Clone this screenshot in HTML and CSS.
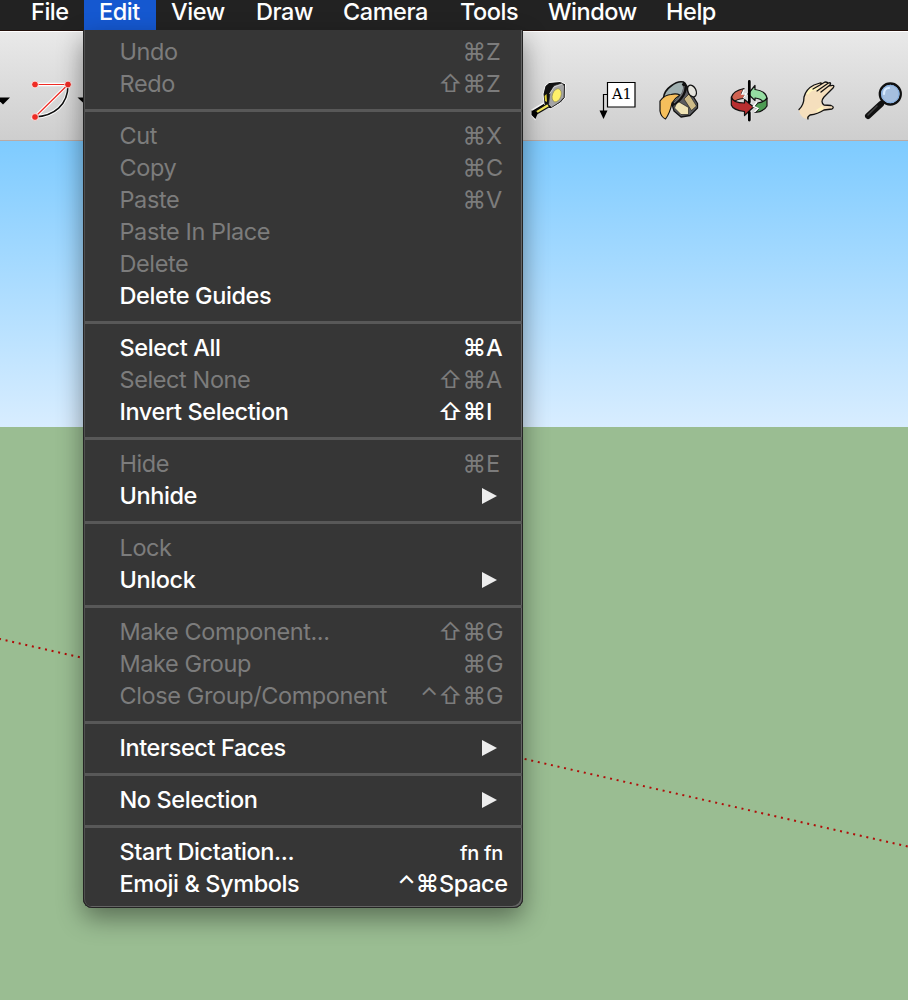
FILE: index.html
```html
<!DOCTYPE html>
<html lang="en">
<head>
    <meta charset="UTF-8">
    <meta name="viewport" content="width=device-width, initial-scale=1.0">
    <title>Edit menu</title>
    <link rel="stylesheet" href="styles.css">
</head>
<body>
    <nav class="menubar">
        <span class="menubar-item">File</span>
        <span class="menubar-item active">Edit</span>
        <span class="menubar-item">View</span>
        <span class="menubar-item">Draw</span>
        <span class="menubar-item">Camera</span>
        <span class="menubar-item">Tools</span>
        <span class="menubar-item">Window</span>
        <span class="menubar-item">Help</span>
    </nav>

    <div class="toolbar">
        <!-- arc tool with its dropdown arrows -->
        <svg class="tool tool-arc" viewBox="0 76 84 50">
            <path d="M-4 97.500H10L3 104.500Z" fill="#000"/>
            <path d="M77.500 97.500H92L85 104.500Z" fill="#000"/>
            <path d="M35 84.500H68L35 117C54 116 68 105 68 85" fill="none" stroke="#fff" stroke-width="3.500"/>
            <path d="M35 117C54 116 68 105 68 85" fill="none" stroke="#111" stroke-width="1.600"/>
            <path d="M35 84.500H68L35 117" fill="none" stroke="#ee2b24" stroke-width="1.200"/>
            <g fill="#ee2b24" stroke="#fff" stroke-width=".8">
                <circle cx="35" cy="84.500" r="3.400"/>
                <circle cx="68" cy="84.500" r="3.400"/>
                <circle cx="35" cy="117" r="3.400"/>
            </g>
        </svg>

        <div class="tool-group">
            <!-- tape measure -->
            <svg class="tool" viewBox="526 76 46 50">
                <path d="M532 110L547 101L550 106L537 113L535 119L531.500 115Z" fill="#000" stroke="#fff" stroke-width="1.600"/>
                <path d="M545 86L549 82.500L560 81.500L565.500 84L565 98L561 102.500L550 109L544 104L543 94Z" fill="#111" stroke="#fff" stroke-width="1"/>
                <path d="M534.500 111.500L547.500 103.500L549.500 106.500L537.500 113.500Z" fill="#f5e85c" stroke="#111" stroke-width="1.200"/>
                <path d="M531.500 110.500L537 111.500L537.500 114L535.500 119L531.500 115Z" fill="#000"/>
                <path d="M544.500 96L546.500 94L547 102L545 101Z" fill="#e7d738"/>
                <path d="M550 92L554 85.500L562 83L564.500 86L564 97.500L560 102L551.500 107.500L548.500 104.500Z" fill="#a5a5a5" stroke="#222" stroke-width=".8"/>
                <path d="M549.500 94L554 87L562.500 84" fill="none" stroke="#ddd" stroke-width=".8"/>
                <ellipse cx="556.700" cy="95.300" rx="4.300" ry="6.800" transform="rotate(19 556.700 95.300)" fill="#fff06a" stroke="#8a8550" stroke-width=".6"/>
            </svg>
            <!-- text label -->
            <svg class="tool" viewBox="596 76 46 50">
                <path d="M607.500 82.500H635V107H607.500Z" fill="#fff" stroke="#000" stroke-width="1.200"/>
                <path d="M607 94.500H603.500V112" fill="none" stroke="#000" stroke-width="1.200"/>
                <path d="M599.500 110.500H607.500L603.500 119Z" fill="#000"/>
                <text x="612" y="99" class="label-text">A1</text>
            </svg>
            <!-- paint bucket -->
            <svg class="tool" viewBox="656 76 46 50">
                <g stroke="#111" stroke-width="1.300" stroke-linejoin="round">
                    <path d="M685 83L697.500 103.500V108L690 115.500L681 117L674 111L672 104Z" fill="#5b5c60"/>
                    <path d="M677.500 101L688.500 107.500L688.500 114.500L681 114.500L674.500 108Z" fill="#efe3b4" stroke-width=".6"/>
                    <path d="M684 99L689 94L696.500 106L691.500 110.500Z" fill="#cdbb87" stroke-width=".6"/>
                    <ellipse cx="692" cy="91" rx="4" ry="6.200" transform="rotate(-25 692 91)" fill="#e4e3dc" stroke-width="1.300"/>
                    <path d="M663.500 98Q664 91 671 86Q678 80.500 683.500 82Q687.500 86 684.500 93Q680 102 672 105Z" fill="#a0b0b0" stroke-width="1.600"/>
                    <path d="M660 101Q665 94.500 671 94.500Q676 93 680 95Q675 98 672 103Q670 113 665.500 119Q661 117 660 111Z" fill="#f5bf5c" stroke-width="1.200"/>
                    <path d="M683 83Q687 87 683 94.500Q679 101 672.500 104.500" fill="none" stroke-width="3.600"/>
                    <path d="M684 86Q684 95 674 103" fill="none" stroke="#707276" stroke-width="1.300"/>
                </g>
            </svg>
            <!-- orbit -->
            <svg class="tool" viewBox="726 76 46 50">
                <path d="M749.300 80.500V120.500" stroke="#eee" stroke-width="4.400"/>
                <g stroke="#111" stroke-width="1.200" stroke-linejoin="round">
                    <path d="M731.500 97Q733 91 744 88.500L741.500 93.500L745.500 94.500L743 98.500Q737 99 734 102Q731.500 100 731.500 97Z" fill="#cf6352"/>
                    <path d="M748 94L755 85.500V89.500Q766 91 767 98.500L763 102Q761 98.500 755 98V100.500Z" fill="#95dda1"/>
                    <path d="M767 98V106Q764 111.500 755 112.500L758.500 109L754 107L757.500 103Q765 102 767 98Z" fill="#4e9c54"/>
                    <path d="M731.300 97Q733 103 744.500 103V99.500L753.500 107L744.500 115.500V111.500Q733 110 731.300 105Z" fill="#b82e30"/>
                </g>
                <path d="M749.300 81.500V102M749.300 112.500V120" stroke="#000" stroke-width="2.800" stroke-linecap="round"/>
                <path d="M744 89.500L742 94L746 94L743.500 98M757 102L753.500 106.500L758 108.500L754.500 112" fill="none" stroke="#fff" stroke-width="1.400"/>
            </svg>
            <!-- pan -->
            <svg class="tool" viewBox="796 76 46 50">
                <path d="M798.500 109.500Q803 106 804 98Q805 91 812 86L819 83Q822 81.500 823 83L828 82Q831 83 829 85L833 85.500Q835 87 832 89L824 97Q821 101 822 104.500L831 105.500Q835 107 833 109L824 110.500Q819 114 810 115L808 119Q801 119 798.500 109.500Z" fill="#f5dfbd"/>
                <path d="M807 94Q811 88 818 89M817 111Q821 109 823 107" fill="none" stroke="#fff4bc" stroke-width="3"/>
                <path d="M799 109.500Q804 105 804 97Q806 89 814 85L820 83Q823 83 820 85L813 89M820 85L825 82Q829 82 827 84L817 91M827 84Q832 81 830 85L821 92M829 86Q836 84 833 88L824 97Q820 102 824 105L831 105.500Q835 107 832 109L824 110Q818 114 810 115Q807 117 808 119" fill="none" stroke="#111" stroke-width="1.300" stroke-linecap="round" stroke-linejoin="round"/>
            </svg>
            <!-- zoom -->
            <svg class="tool" viewBox="862 76 46 50">
                <path d="M881 104L868 116" stroke="#111" stroke-width="6" stroke-linecap="round"/>
                <path d="M877 106L868 115" stroke="#414141" stroke-width="1.500" stroke-linecap="round"/>
                <circle cx="890.300" cy="94" r="10.500" fill="#a5bfdf" stroke="#111" stroke-width="2.300"/>
                <circle cx="890.300" cy="94" r="8.700" fill="none" stroke="#83afe2" stroke-width="1"/>
                <path d="M884 94Q884 88 889 88" fill="none" stroke="#d7ebff" stroke-width="2.200" stroke-linecap="round"/>
            </svg>
        </div>
    </div>

    <div class="scene">
        <svg class="axis" viewBox="0 141 908 859">
            <path d="M-1 638.800L908 846.500" stroke="#b00c08" stroke-width="2" stroke-dasharray="2 4.740"/>
        </svg>
    </div>

    <div class="menu">
        <div class="row off"><span>Undo</span><span class="mods">⌘</span><span class="key">Z</span></div>
        <div class="row off"><span>Redo</span><span class="mods">⇧⌘</span><span class="key">Z</span></div>
        <div class="line"></div>
        <div class="row off"><span>Cut</span><span class="mods">⌘</span><span class="key">X</span></div>
        <div class="row off"><span>Copy</span><span class="mods">⌘</span><span class="key">C</span></div>
        <div class="row off"><span>Paste</span><span class="mods">⌘</span><span class="key">V</span></div>
        <div class="row off"><span>Paste In Place</span></div>
        <div class="row off"><span>Delete</span></div>
        <div class="row"><span>Delete Guides</span></div>
        <div class="line"></div>
        <div class="row"><span>Select All</span><span class="mods">⌘</span><span class="key">A</span></div>
        <div class="row off"><span>Select None</span><span class="mods">⇧⌘</span><span class="key">A</span></div>
        <div class="row"><span>Invert Selection</span><span class="mods">⇧⌘</span><span class="key">I</span></div>
        <div class="line"></div>
        <div class="row off"><span>Hide</span><span class="mods">⌘</span><span class="key">E</span></div>
        <div class="row"><span>Unhide</span><span class="arrow"></span></div>
        <div class="line"></div>
        <div class="row off"><span>Lock</span></div>
        <div class="row"><span>Unlock</span><span class="arrow"></span></div>
        <div class="line"></div>
        <div class="row off"><span>Make Component...</span><span class="mods">⇧⌘</span><span class="key">G</span></div>
        <div class="row off"><span>Make Group</span><span class="mods">⌘</span><span class="key">G</span></div>
        <div class="row off"><span>Close Group/Component</span><span class="mods">⌃⇧⌘</span><span class="key">G</span></div>
        <div class="line"></div>
        <div class="row"><span>Intersect Faces</span><span class="arrow"></span></div>
        <div class="line"></div>
        <div class="row"><span>No Selection</span><span class="arrow"></span></div>
        <div class="line"></div>
        <div class="row"><span>Start Dictation...</span><span class="fn">fn fn</span></div>
        <div class="row"><span>Emoji &amp; Symbols</span><span class="mods">⌃⌘</span><span class="key wide">Space</span></div>
    </div>
</body>
</html>
```
FILE: styles.css
```css
body {
    margin: 0;
    height: 1000px;
    overflow: hidden;
    position: relative;
    display: flex;
    flex-direction: column;
    font-family: Inter, "Liberation Sans", sans-serif;
    font-size: 23.5px;
    color: white;
}
.menubar {
    box-sizing: border-box;
    height: 31px;
    padding-left: 16px;
    display: grid;
    grid-template-columns: 68px 72px 85px 87px 117px 88px 118px 90px;
    background: #222;
    border-bottom: 1px solid #22100b;
    font-weight: 500;
    letter-spacing: -0.45px;
}
.menubar-item {
    height: 30px;
    line-height: 24px;
    padding-left: 15px;
    white-space: nowrap;
}
.active {
    background: #1558d0;
}
.toolbar {
    box-sizing: border-box;
    height: 110px;
    padding-top: 44px;
    display: flex;
    justify-content: space-between;
    background: linear-gradient(#e9e9e9, #cecece);
    border-top: 1px solid #fff;
    border-bottom: 1px solid #b9aaa5;
}
.tool {
    width: 46px;
    height: 50px;
}
.tool-arc {
    width: 84px;
}
.tool-group {
    width: 382px;
    display: grid;
    grid-template-columns: 70px 60px 70px 70px 66px 46px;
}
.label-text {
    font-family: "DejaVu Serif", serif;
    font-size: 14.5px;
    fill: #000;
}
.scene {
    height: 859px;
    background: linear-gradient(#7ecbff, #d8edff 286px, #9abd92 286px);
}
.axis {
    display: block;
    width: 908px;
    height: 859px;
}
.menu {
    position: absolute;
    top: 30px;
    left: 83px;
    box-sizing: border-box;
    width: 440px;
    height: 878px;
    padding-top: 6px;
    background: #363636;
    border-radius: 0 0 9px 9px;
    box-shadow: inset 0 -1px 0 #242424, inset 1px 0 0 #242424, inset -1px 0 0 #242424, inset -2px -2px 0 #646464, inset 2px 0 0 #505050, 0 10px 26px rgba(0, 0, 0, 0.42);
}
.row {
    box-sizing: border-box;
    height: 32px;
    padding: 0 15px 1px 36.5px;
    display: flex;
    align-items: center;
    white-space: nowrap;
    font-weight: 500;
    letter-spacing: -0.4px;
}
.row span:first-child {
    margin-right: auto;
}
.off {
    color: #7c7c7c;
    font-weight: 400;
    letter-spacing: -0.4px;
}
.mods {
    letter-spacing: 0;
}
.key {
    width: 22px;
}
.wide {
    width: 69px;
}
.row .fn {
    font-size: 20px;
    margin: 2px 5px 0 0;
    letter-spacing: -0.3px;
}
.arrow {
    width: 15px;
    height: 16px;
    margin: 1px 11px 0 0;
    background: #ededed;
    clip-path: polygon(0 0, 100% 50%, 0 100%);
}
.line {
    height: 3px;
    margin: 9px 1px 8px 2px;
    background: #585858;
}
```
